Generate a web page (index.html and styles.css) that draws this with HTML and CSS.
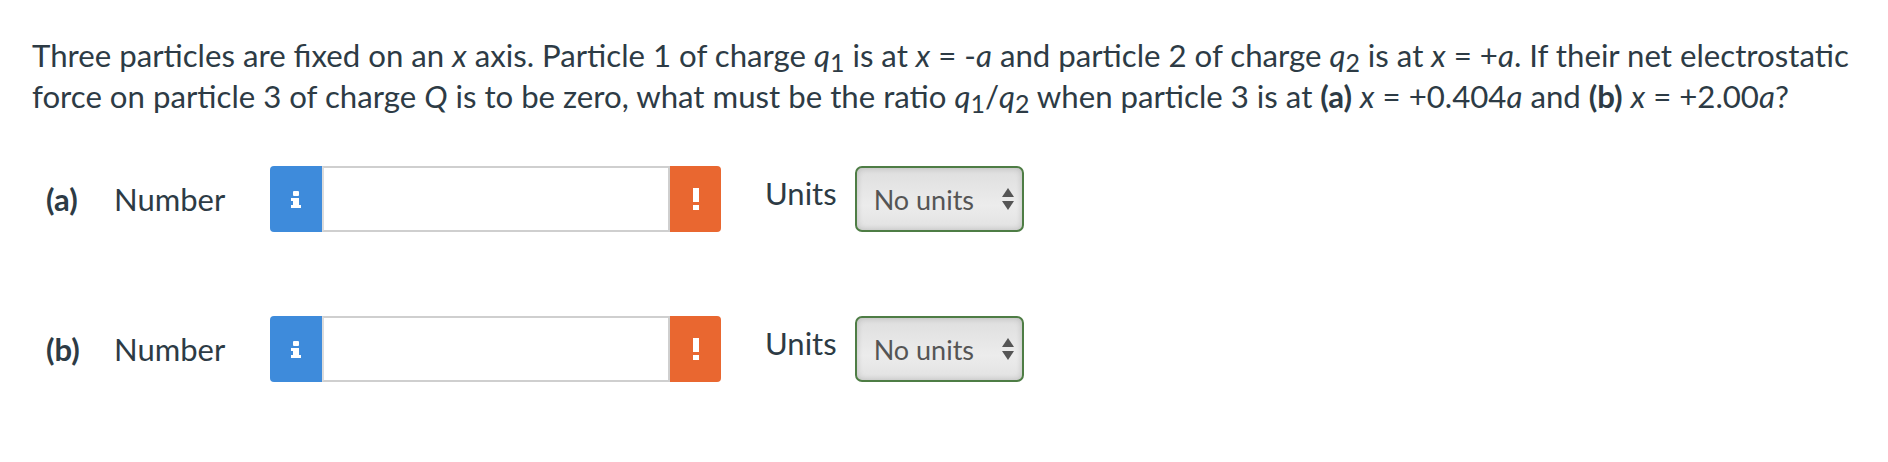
FILE: index.html
```html
<!DOCTYPE html>
<html>
<head>
<meta charset="utf-8">
<link rel="stylesheet" href="styles.css">
</head>
<body>
<div class="question">
  <p class="prompt">Three particles are fixed on an <i>x</i> axis. Particle 1 of charge <i>q</i><sub>1</sub> is at <i>x</i> = -<i>a</i> and particle 2 of charge <i>q</i><sub>2</sub> is at <i>x</i> = +<i>a</i>. If their net electrostatic force on particle 3 of charge <i>Q</i> is to be zero, what must be the ratio <i>q</i><sub>1</sub>/<i>q</i><sub>2</sub> when particle 3 is at <b>(a)</b> <i>x</i> = +0.404<i>a</i> and <b>(b)</b> <i>x</i> = +2.00<i>a</i>?</p>

  <div class="part">
    <span class="part-label">(a)</span>
    <span class="num-label">Number</span>
    <div class="input-group">
      <span class="addon info"><svg width="12" height="17" viewBox="0 0 12 17"><rect x="3" y="0" width="6" height="5" rx="1" fill="#fff"/><path d="M1 7h8v7h2v3H1v-3h2v-4H1z" fill="#fff"/></svg></span>
      <span class="field"></span>
      <span class="addon warn"><svg width="6" height="22" viewBox="0 0 6 22"><rect x="0" y="0" width="6" height="14" fill="#fff"/><rect x="0" y="17" width="6" height="5" fill="#fff"/></svg></span>
    </div>
    <span class="units-label">Units</span>
    <div class="select"><span>No units</span><svg class="arrows" width="12" height="22" viewBox="0 0 12 22"><path d="M6 0L12 9H0z" fill="#555"/><path d="M0 13h12L6 22z" fill="#555"/></svg></div>
  </div>

  <div class="part">
    <span class="part-label">(b)</span>
    <span class="num-label">Number</span>
    <div class="input-group">
      <span class="addon info"><svg width="12" height="17" viewBox="0 0 12 17"><rect x="3" y="0" width="6" height="5" rx="1" fill="#fff"/><path d="M1 7h8v7h2v3H1v-3h2v-4H1z" fill="#fff"/></svg></span>
      <span class="field"></span>
      <span class="addon warn"><svg width="6" height="22" viewBox="0 0 6 22"><rect x="0" y="0" width="6" height="14" fill="#fff"/><rect x="0" y="17" width="6" height="5" fill="#fff"/></svg></span>
    </div>
    <span class="units-label">Units</span>
    <div class="select"><span>No units</span><svg class="arrows" width="12" height="22" viewBox="0 0 12 22"><path d="M6 0L12 9H0z" fill="#555"/><path d="M0 13h12L6 22z" fill="#555"/></svg></div>
  </div>
</div>
</body>
</html>
```
FILE: styles.css
```css
html, body {
  margin: 0;
  padding: 0;
  background: #fff;
}
body {
  font-family: Lato, "Liberation Sans", sans-serif;
  color: #2d3b45;
}
.question {
  padding: 35px 0 0 32px;
}
.prompt {
  margin: 0;
  font-size: 31.2px;
  line-height: 41px;
}
.prompt sub {
  font-size: 0.8em;
  line-height: 0;
  vertical-align: -0.2em;
}
.part {
  display: flex;
  align-items: center;
  height: 66px;
  margin-top: 49px;
}
.part + .part {
  margin-top: 84px;
}
.part-label {
  font-weight: 700;
  font-size: 31px;
  width: 68px;
  padding-left: 14px;
}
.num-label {
  font-size: 31px;
  width: 156px;
}
.input-group {
  display: flex;
  height: 66px;
}
.addon {
  width: 52px;
  display: flex;
  align-items: center;
  justify-content: center;
}
.info {
  background: #3e8bdb;
  border-radius: 4px 0 0 4px;
}
.warn {
  background: #e96730;
  border-radius: 0 4px 4px 0;
  width: 51px;
}
.field {
  width: 344px;
  border: 2px solid #cfcfcf;
  border-left: 2px solid #dcdcdc;
  border-right: 2px solid #cfcfcf;
  background: #fff;
}
.units-label {
  font-size: 31px;
  margin-left: 44px;
  margin-right: 18px;
  align-self: flex-start;
  margin-top: 8px;
}
.select {
  box-sizing: border-box;
  width: 169px;
  height: 66px;
  border: 2px solid #4e7d45;
  border-radius: 7px;
  background: linear-gradient(#dedede, #ececec 60%, #e2e2e2);
  box-shadow: inset 0 0 6px rgba(0,0,0,0.18);
  display: flex;
  align-items: center;
  justify-content: space-between;
  padding: 0 8px 0 17px;
  color: #555;
  font-size: 27px;
}
.arrows {
  display: block;
}
```
